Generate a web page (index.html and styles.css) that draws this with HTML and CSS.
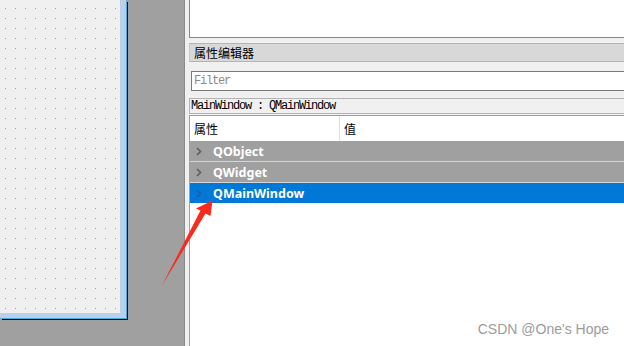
FILE: index.html
```html
<!DOCTYPE html>
<html lang="zh-CN">
<head>
    <meta charset="UTF-8">
    <title>属性编辑器</title>
    <link rel="stylesheet" href="styles.css">
</head>
<body>
    <div class="workspace">
        <div class="form"></div>
    </div>
    <div class="dock">
        <div class="objbox"></div>
        <div class="dock-title">属性编辑器</div>
        <div class="filter">Filter</div>
        <div class="classname">MainWindow : QMainWindow</div>
        <div class="tree">
            <div class="tree-head">
                <div class="col-prop">属性</div>
                <div class="col-val">值</div>
            </div>
            <div class="row">
                <svg class="chev" width="6" height="9" viewBox="0 0 6 9"><polyline points="1,1 4.5,4.5 1,8"/></svg>
                <span>QObject</span>
            </div>
            <div class="row">
                <svg class="chev" width="6" height="9" viewBox="0 0 6 9"><polyline points="1,1 4.5,4.5 1,8"/></svg>
                <span>QWidget</span>
            </div>
            <div class="row active">
                <svg class="chev" width="6" height="9" viewBox="0 0 6 9"><polyline points="1,1 4.5,4.5 1,8"/></svg>
                <span>QMainWindow</span>
            </div>
        </div>
    </div>

    <!-- 红色箭头 -->
    <svg class="arrow" width="624" height="346" viewBox="0 0 624 346">
        <polygon points="212.5,200.5 210.5,216 205.5,213.5 162,285.5 200.5,210.5 196,208.5"/>
    </svg>
    <div class="mark">CSDN @One's Hope</div>
</body>
</html>
```

FILE: styles.css
```css
* {
    margin: 0;
    padding: 0;
    box-sizing: content-box;
}
body {
    width: 624px;
    height: 346px;
    overflow: hidden;
    position: relative;
    display: flex;
    background: #a0a0a0;
    font-family: "Noto Sans CJK SC", "Noto Sans", sans-serif;
    font-size: 12px;
    color: #000;
}
.workspace {
    width: 184px;
    flex: none;
}
/* 设计器里的窗体 */
.form {
    position: relative;
    width: 120px;
    height: 313px;
    background: #f0f0f0;
    border-right: 6px solid #b9d1ea;
    border-bottom: 5px solid #b9d1ea;
    box-shadow: 1px 1px 0 #35b2e4, 2px 2px 0 #000;
}
/* 网格点 */
.form::before {
    content: "";
    position: absolute;
    left: 0;
    top: 0;
    right: 0;
    bottom: 0;
    background: repeating-linear-gradient(90deg, transparent 0 5px, #9c9c9c 5px 6px, transparent 6px 10px);
    -webkit-mask: repeating-linear-gradient(180deg, transparent 0 8px, #000 8px 9px, transparent 9px 10px);
    mask: repeating-linear-gradient(180deg, transparent 0 8px, #000 8px 9px, transparent 9px 10px);
}
.dock {
    flex: 1;
    display: flex;
    flex-direction: column;
    border-left: 1px solid #8a8a8a;
    background: #f0f0f0;
    padding-left: 4px;
}
.objbox {
    height: 37px;
    background: #fff;
    border-left: 1px solid #828790;
    border-bottom: 1px solid #828790;
}
.dock-title {
    margin-top: 5px;
    height: 17px;
    line-height: 17px;
    padding-left: 4px;
    background: #d8d8d8;
    border-top: 1px solid #b4b4b4;
    border-bottom: 1px solid #b4b4b4;
    border-left: 1px solid #c8c8c8;
}
.filter {
    margin: 9px 0 0 2px;
    height: 18px;
    line-height: 18px;
    padding-left: 2px;
    background: #fff;
    border: 1px solid #7a7a7a;
    border-right: none;
    font-family: "Liberation Mono", monospace;
    letter-spacing: -1.2px;
    color: #8a8a8a;
}
.classname {
    margin-top: 7px;
    height: 14px;
    line-height: 14px;
    padding-left: 1px;
    border-top: 1px solid #b4b4b4;
    border-bottom: 1px solid #b4b4b4;
    border-left: 1px solid #b4b4b4;
    font-family: "Liberation Mono", monospace;
    letter-spacing: -1.2px;
}
.tree {
    flex: 1;
    margin-top: 1px;
    background: #fff;
    border-top: 1px solid #a0a0a0;
    border-left: 1px solid #a0a0a0;
}
.tree-head {
    display: flex;
    height: 25px;
    line-height: 25px;
}
.col-prop {
    width: 145px;
    padding-left: 4px;
    border-right: 1px solid #e2e2e2;
}
.col-val {
    padding-left: 4px;
}
.row {
    display: flex;
    align-items: center;
    height: 20px;
    padding-left: 6px;
    background: #a0a0a0;
    border-bottom: 1px solid #d6d6d6;
    font-family: "Noto Sans", sans-serif;
    font-weight: bold;
    font-size: 12.5px;
    color: #fff;
}
.row span {
    margin-left: 11px;
}
.row.active {
    background: #0078d7;
    border-bottom: none;
}
.chev polyline {
    fill: none;
    stroke: #5e5e5e;
    stroke-width: 1.6;
}
.row.active .chev polyline {
    stroke: #1f5d9c;
}
.arrow {
    position: absolute;
    left: 0;
    top: 0;
    pointer-events: none;
}
.arrow polygon {
    fill: #fb2a1c;
}
.mark {
    position: absolute;
    right: 15px;
    top: 321px;
    line-height: 16px;
    font-family: "Liberation Sans", sans-serif;
    font-size: 14px;
    color: #9c9c9c;
}
```
